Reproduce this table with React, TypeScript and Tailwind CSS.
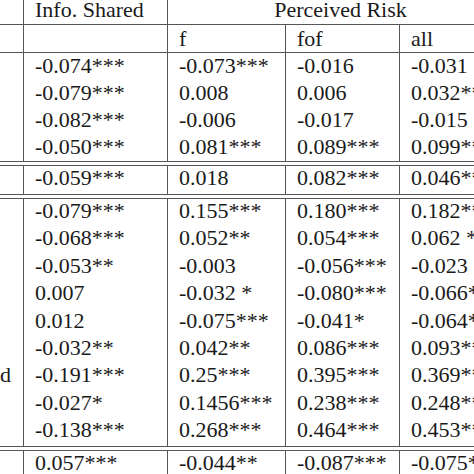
import React from 'react';

type Row = { label?: string; cells: string[] };

const block1: Row[] = [
  { cells: ['-0.074***', '-0.073***', '-0.016', '-0.031'] },
  { cells: ['-0.079***', '0.008', '0.006', '0.032**'] },
  { cells: ['-0.082***', '-0.006', '-0.017', '-0.015'] },
  { cells: ['-0.050***', '0.081***', '0.089***', '0.099***'] },
];

const block2: Row[] = [{ cells: ['-0.059***', '0.018', '0.082***', '0.046***'] }];

const block3: Row[] = [
  { cells: ['-0.079***', '0.155***', '0.180***', '0.182***'] },
  { cells: ['-0.068***', '0.052**', '0.054***', '0.062 **'] },
  { cells: ['-0.053**', '-0.003', '-0.056***', '-0.023'] },
  { cells: ['0.007', '-0.032 *', '-0.080***', '-0.066**'] },
  { cells: ['0.012', '-0.075***', '-0.041*', '-0.064**'] },
  { cells: ['-0.032**', '0.042**', '0.086***', '0.093***'] },
  { label: 'd', cells: ['-0.191***', '0.25***', '0.395***', '0.369***'] },
  { cells: ['-0.027*', '0.1456***', '0.238***', '0.248***'] },
  { cells: ['-0.138***', '0.268***', '0.464***', '0.453***'] },
];

const block4: Row[] = [{ cells: ['0.057***', '-0.044**', '-0.087***', '-0.075**'] }];

const cols = 'grid grid-cols-[23px_144px_118px_114px_114px]';
const cell = 'border-l border-[#555] pl-[11px] whitespace-nowrap';

function DataRow({ row, h }: { row: Row; h: string }) {
  return (
    <div className={`${cols} ${h}`}>
      <div className="pr-3 text-right whitespace-nowrap">{row.label ?? ''}</div>
      {row.cells.map((c, i) => (
        <div key={i} className={cell}>
          {c}
        </div>
      ))}
    </div>
  );
}

function Rule() {
  return <div className="h-px w-[513px] bg-[#555]" />;
}

function DoubleRule() {
  return <div className="h-[5px] w-[513px] border-y border-[#555]" />;
}

export default function App() {
  return (
    <div className="w-[474px] h-[474px] overflow-hidden bg-white text-[#1a1a1a] text-[22px] font-['Liberation_Serif','Times_New_Roman',serif]">
      <div className="w-[513px]">
        {/* header */}
        <div className={`${cols} h-[24px] leading-[17px] items-end`}>
          <div className="h-full" />
          <div className={`${cell} h-full flex items-end pb-[6px]`}>Info. Shared</div>
          <div className="col-span-3 h-full border-l border-[#555] flex items-end justify-center pb-[6px]">
            Perceived Risk
          </div>
        </div>
        <Rule />
        <div className={`${cols} h-[27px] leading-[27px]`}>
          <div />
          <div className={cell} />
          <div className={cell}>f</div>
          <div className={cell}>fof</div>
          <div className={cell}>all</div>
        </div>
        <Rule />
        {block1.map((r, i) => (
          <DataRow key={i} row={r} h="h-[27px] leading-[26px]" />
        ))}
        <DoubleRule />
        {block2.map((r, i) => (
          <DataRow key={i} row={r} h="h-[28px] leading-[24px]" />
        ))}
        <DoubleRule />
        {block3.map((r, i) => (
          <DataRow key={i} row={r} h="h-[27.4px] leading-[24px]" />
        ))}
        <DoubleRule />
        {block4.map((r, i) => (
          <DataRow key={i} row={r} h="h-[28px] leading-[23px]" />
        ))}
      </div>
    </div>
  );
}
